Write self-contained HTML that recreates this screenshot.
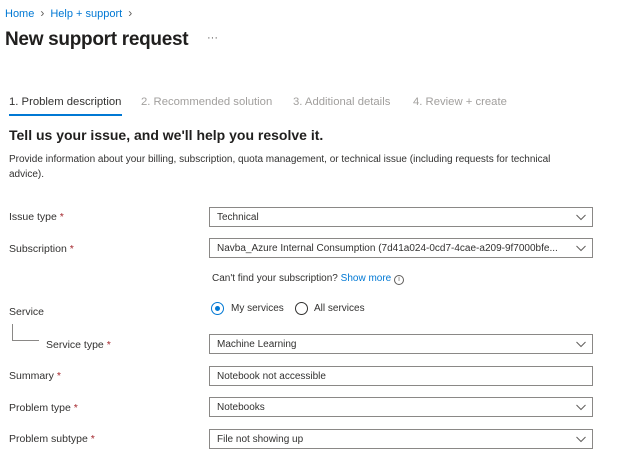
<!DOCTYPE html>
<html><head><style>
body{margin:0;width:642px;height:475px;background:#fff;font-family:"Liberation Sans",sans-serif;color:#323130;position:relative;overflow:hidden}
.a{position:absolute;white-space:nowrap}
.bc{font-size:11px;color:#0078d4;top:6px;left:5px}
.bc span{color:#605e5c;margin:0 6px;font-size:12px}
.t{font-size:19px;top:29px;left:5px;color:#201f1e;font-weight:600;letter-spacing:-0.3px}
.tab{font-size:11.3px;top:96px;color:#a19f9d}
.lbl{font-size:10.5px;left:9px}
.lbl b{color:#a4262c;font-weight:normal}
.box{position:absolute;left:209px;height:18px;border:1px solid #8a8886;font-size:10px;line-height:19px;padding-left:7px;box-sizing:content-box;width:375px}
.box svg{position:absolute;right:6px;top:6px}
.rad{position:absolute;width:13px;height:13px;border:1px solid #323130;border-radius:50%;box-sizing:border-box}
</style></head><body>
<div class="a bc">Home<span>›</span>Help + support<span>›</span></div>
<div class="a t">New support request</div>
<div class="a" style="left:207px;top:32px;font-size:11px;color:#605e5c">···</div>
<div class="a tab" style="left:9px;color:#323130">1. Problem description</div>
<div class="a" style="left:9px;top:114px;width:113px;height:2px;background:#0078d4"></div>
<div class="a tab" style="left:141px">2. Recommended solution</div>
<div class="a tab" style="left:293px">3. Additional details</div>
<div class="a tab" style="left:413px">4. Review + create</div>
<div class="a" style="left:9px;top:127px;font-size:14px;font-weight:600;color:#201f1e">Tell us your issue, and we'll help you resolve it.</div>
<div class="a" style="left:9px;top:152px;font-size:10px;line-height:15px;white-space:normal;width:560px">Provide information about your billing, subscription, quota management, or technical issue (including requests for technical advice).</div>

<div class="a lbl" style="top:211px">Issue type <b>*</b></div>
<div class="box" style="top:207px">Technical<svg width="10" height="7"><path d="M0.5 1 L5 5.5 L9.5 1" fill="none" stroke="#605e5c"/></svg></div>
<div class="a lbl" style="top:243px">Subscription <b>*</b></div>
<div class="box" style="top:238px">Navba_Azure Internal Consumption (7d41a024-0cd7-4cae-a209-9f7000bfe...<svg width="10" height="7"><path d="M0.5 1 L5 5.5 L9.5 1" fill="none" stroke="#605e5c"/></svg></div>
<div class="a" style="left:212px;top:273px;font-size:10px">Can't find your subscription? <span style="color:#0078d4">Show more</span> <span style="display:inline-block;width:8px;height:8px;border:1px solid #605e5c;border-radius:50%;font-size:7px;line-height:8px;text-align:center;color:#605e5c">i</span></div>
<div class="a lbl" style="top:306px">Service</div>
<div class="rad" style="left:211px;top:302px;border-color:#0078d4"><div style="position:absolute;left:3px;top:3px;width:5px;height:5px;border-radius:50%;background:#0078d4"></div></div>
<div class="a" style="left:231px;top:303px;font-size:10px">My services</div>
<div class="rad" style="left:295px;top:302px"></div>
<div class="a" style="left:314px;top:303px;font-size:10px">All services</div>
<div class="a" style="left:12px;top:324px;width:26px;height:16px;border-left:1px solid #8a8886;border-bottom:1px solid #8a8886"></div>
<div class="a lbl" style="left:46px;top:339px">Service type <b>*</b></div>
<div class="box" style="top:334px">Machine Learning<svg width="10" height="7"><path d="M0.5 1 L5 5.5 L9.5 1" fill="none" stroke="#605e5c"/></svg></div>
<div class="a lbl" style="top:370px">Summary <b>*</b></div>
<div class="box" style="top:366px">Notebook not accessible</div>
<div class="a lbl" style="top:402px">Problem type <b>*</b></div>
<div class="box" style="top:397px">Notebooks<svg width="10" height="7"><path d="M0.5 1 L5 5.5 L9.5 1" fill="none" stroke="#605e5c"/></svg></div>
<div class="a lbl" style="top:433px">Problem subtype <b>*</b></div>
<div class="box" style="top:429px">File not showing up<svg width="10" height="7"><path d="M0.5 1 L5 5.5 L9.5 1" fill="none" stroke="#605e5c"/></svg></div>
</body></html>
